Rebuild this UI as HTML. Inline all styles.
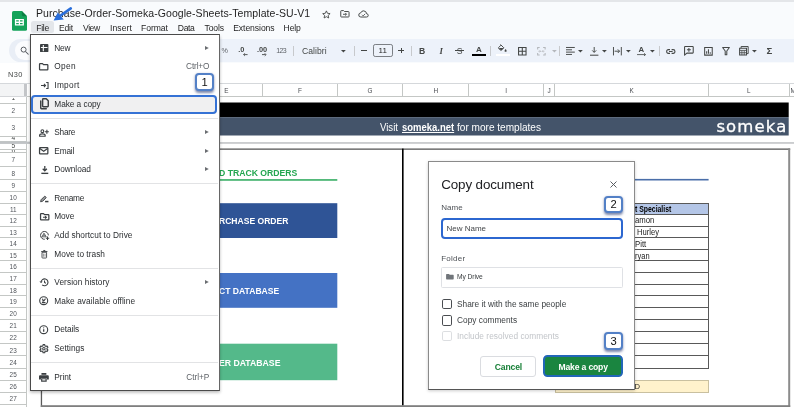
<!DOCTYPE html>
<html><head><meta charset="utf-8"><title>Purchase-Order-Someka-Google-Sheets-Template-SU-V1</title>
<style>
html,body{margin:0;padding:0;}
body{width:794px;height:407px;overflow:hidden;background:#f9fbfd;font-family:"Liberation Sans",Arial,sans-serif;}
#root{position:relative;width:794px;height:407px;overflow:hidden;will-change:transform;}
.t{position:absolute;white-space:nowrap;line-height:20px;height:20px;}
.r{position:absolute;box-sizing:border-box;}
svg{position:absolute;overflow:visible;}
</style></head><body><div id="root">
<div class="r" style="left:0px;top:0px;width:794px;height:1.8px;background:#e4e6e9;"></div>
<svg style="left:12.2px;top:10.6px" width="15" height="19.8" viewBox="0 0 15 19.8">
<path d="M1.6 0H9.8L15 5.2V18.2Q15 19.8 13.4 19.8H1.6Q0 19.8 0 18.2V1.6Q0 0 1.6 0Z" fill="#14a35a"/>
<path d="M9.8 0L15 5.2H11.2Q9.8 5.2 9.8 3.8Z" fill="#0c8045"/>
<path d="M2.9 8H11.9V14.5H2.9Z M4.2 9.3V10.6H6.8V9.3Z M8 9.3V10.6H10.6V9.3Z M4.2 11.9V13.2H6.8V11.9Z M8 11.9V13.2H10.6V11.9Z" fill="#fff" fill-rule="evenodd"/>
</svg>
<span class="t" style="left:36.0px;top:3px;font-size:10.5px;color:#1f1f1f;letter-spacing:0.070px;">Purchase-Order-Someka-Google-Sheets-Template-SU-V1</span>
<svg style="left:322px;top:9.6px" width="8.8" height="8.6" viewBox="0 0 24 23"><path d="M12 2.2l3 6.6 7.1.8-5.3 4.9 1.5 7.1L12 18l-6.3 3.6 1.5-7.1L1.9 9.6 9 8.8z" fill="none" stroke="#444746" stroke-width="2.4" stroke-linejoin="round"/></svg>
<svg style="left:340px;top:10.4px" width="9.8" height="7.6" viewBox="0 0 26 20"><path d="M2 3.2Q2 1.5 3.7 1.5H9.5L12 4H22.3Q24 4 24 5.7V16.8Q24 18.5 22.3 18.5H3.7Q2 18.5 2 16.8Z" fill="none" stroke="#444746" stroke-width="2.6"/><path d="M8 11.3H17M14 8l3.3 3.3L14 14.6" fill="none" stroke="#444746" stroke-width="2.4"/></svg>
<svg style="left:358px;top:10.4px" width="11" height="7.6" viewBox="0 0 29 20"><path d="M7.5 18.5H22.5Q27 18.5 27 14.2Q27 10.4 23 10Q22 3 15 2.2Q9 2.2 7.2 7.6Q2 8.2 2 13.2Q2 18.5 7.5 18.5Z" fill="none" stroke="#444746" stroke-width="2.6"/><path d="M10.5 12.5l3 3 5.5-5.5" fill="none" stroke="#444746" stroke-width="2.2"/></svg>
<div class="r" style="left:31.3px;top:20.8px;width:22.4px;height:12.2px;background:#e3e6ea;border-radius:2.5px;"></div>
<span class="t" style="left:36.2px;top:18px;font-size:8.6px;color:#1f1f1f;letter-spacing:-0.290px;">File</span>
<span class="t" style="left:59.0px;top:18px;font-size:8.6px;color:#1f1f1f;letter-spacing:-0.205px;">Edit</span>
<span class="t" style="left:83.0px;top:18px;font-size:8.6px;color:#1f1f1f;letter-spacing:-0.446px;">View</span>
<span class="t" style="left:110.0px;top:18px;font-size:8.6px;color:#1f1f1f;letter-spacing:0.082px;">Insert</span>
<span class="t" style="left:141.0px;top:18px;font-size:8.6px;color:#1f1f1f;letter-spacing:-0.073px;">Format</span>
<span class="t" style="left:177.8px;top:18px;font-size:8.6px;color:#1f1f1f;letter-spacing:-0.367px;">Data</span>
<span class="t" style="left:204.5px;top:18px;font-size:8.6px;color:#1f1f1f;letter-spacing:-0.115px;">Tools</span>
<span class="t" style="left:233.2px;top:18px;font-size:8.6px;color:#1f1f1f;letter-spacing:-0.067px;">Extensions</span>
<span class="t" style="left:283.6px;top:18px;font-size:8.6px;color:#1f1f1f;letter-spacing:-0.122px;">Help</span>
<svg style="left:0;top:0" width="794" height="407"><path d="M70.8 8.4L58.5 17" stroke="#2a6fdb" stroke-width="2.6" stroke-linecap="round" fill="none"/><path d="M53.6 20.4L57.8 12.4L63.8 19.6Z" fill="#2a6fdb"/></svg>
<div class="r" style="left:9px;top:39.2px;width:800px;height:23.2px;background:#e9eef6;border-radius:11.6px;"></div>
<div class="r" style="left:100px;top:39.2px;width:700px;height:23.2px;background:#edf2fa;"></div>
<div class="r" style="left:14.6px;top:41px;width:80px;height:18.6px;background:#fbfcfe;border-radius:9.3px;"></div>
<svg style="left:20px;top:45.6px" width="9" height="9" viewBox="0 0 18 18"><circle cx="7.2" cy="7.2" r="5" fill="none" stroke="#50545a" stroke-width="1.9"/><path d="M11 11l6 6" stroke="#50545a" stroke-width="2.1"/></svg>
<div class="r" style="left:0px;top:62.5px;width:794px;height:21px;background:#ffffff;"></div>
<span class="t" style="left:8.0px;top:65px;font-size:7.4px;color:#444746;letter-spacing:0.408px;">N30</span>
<span class="t" style="left:221.4px;top:41px;font-size:7.2px;color:#5f6368;">%</span>
<span class="t" style="left:238.2px;top:40px;font-size:7.4px;color:#444746;font-weight:700;letter-spacing:0.114px;">.0</span>
<svg style="left:243.2px;top:52.5px" width="4.6" height="3.2" viewBox="0 0 46 32"><path d="M46 16H10M18 3L5 16L18 29" fill="none" stroke="#444746" stroke-width="9"/></svg>
<span class="t" style="left:257.1px;top:40px;font-size:7.4px;color:#444746;font-weight:700;letter-spacing:-0.096px;">.00</span>
<svg style="left:261.8px;top:52.5px" width="4.6" height="3.2" viewBox="0 0 46 32"><path d="M0 16H36M28 3L41 16L28 29" fill="none" stroke="#444746" stroke-width="9"/></svg>
<span class="t" style="left:276.2px;top:41px;font-size:7px;color:#5f6368;letter-spacing:-0.627px;">123</span>
<div class="r" style="left:292.5px;top:45.6px;width:1px;height:10.2px;background:#c7c9cc;"></div>
<span class="t" style="left:302.0px;top:41px;font-size:8.6px;color:#444746;letter-spacing:0.032px;">Calibri</span>
<svg style="left:340.8px;top:49.6px" width="4.8" height="2.6" viewBox="0 0 48 26"><path d="M0 0H48L24 26Z" fill="#444746"/></svg>
<div class="r" style="left:353.8px;top:45.6px;width:1px;height:10.2px;background:#c7c9cc;"></div>
<div class="r" style="left:361.2px;top:50.1px;width:5.6px;height:1px;background:#444746;"></div>
<div class="r" style="left:373px;top:43.8px;width:19.6px;height:13.4px;border:1px solid #7b7f84;border-radius:2.2px;"></div>
<span class="t" style="left:378.6px;top:41px;font-size:8px;color:#1f1f1f;">11</span>
<div class="r" style="left:398.2px;top:50.1px;width:5.6px;height:1px;background:#444746;"></div>
<div class="r" style="left:400.5px;top:47.8px;width:1px;height:5.6px;background:#444746;"></div>
<div class="r" style="left:410.6px;top:45.6px;width:1px;height:10.2px;background:#c7c9cc;"></div>
<span class="t" style="left:418.9px;top:41px;font-size:8.6px;color:#444746;font-weight:700;">B</span>
<span class="t" style="left:439.5px;top:41px;font-size:8.6px;color:#444746;font-weight:700;font-style:italic;font-family:'Liberation Serif',serif;">I</span>
<span class="t" style="left:456.7px;top:41px;font-size:8.6px;color:#444746;">S</span>
<div class="r" style="left:455.4px;top:50.4px;width:8.4px;height:0.9px;background:#444746;"></div>
<span class="t" style="left:476.1px;top:40px;font-size:8px;color:#444746;font-weight:700;">A</span>
<div class="r" style="left:472px;top:53.6px;width:13.7px;height:2.4px;background:#000;"></div>
<div class="r" style="left:490.1px;top:45.6px;width:1px;height:10.2px;background:#c7c9cc;"></div>
<svg style="left:497.6px;top:44.4px" width="9.6" height="8" viewBox="0 0 24 20"><path d="M6.2 1.2L14.5 9.5L8.4 15.6Q7.4 16.6 6.4 15.6L1.6 10.8Q0.6 9.8 1.6 8.8L7.6 2.8" fill="none" stroke="#444746" stroke-width="2.4"/><path d="M2 10H14L8 16Z" fill="#444746"/><path d="M19 12.5Q21.6 15.6 21.6 17.2Q21.6 19.4 19 19.4Q16.4 19.4 16.4 17.2Q16.4 15.6 19 12.5Z" fill="#444746"/></svg>
<div class="r" style="left:496.3px;top:53.6px;width:13.6px;height:2.4px;background:#ffffff;"></div>
<svg style="left:517.6px;top:46.8px" width="8.6" height="8.6" viewBox="0 0 20 20"><path d="M1.3 1.3H18.7V18.7H1.3ZM10 1.3V18.7M1.3 10H18.7" fill="none" stroke="#444746" stroke-width="2.5"/></svg>
<svg style="left:537.2px;top:46.8px" width="8.8" height="8.6" viewBox="0 0 20 20"><path d="M6 1.3H1.3V6M14 1.3H18.7V6M6 18.7H1.3V14M14 18.7H18.7V14" fill="none" stroke="#b4b7bb" stroke-width="2.5"/><path d="M3 10H8M6 7.6L8.4 10L6 12.4M17 10H12M14 7.6L11.6 10L14 12.4" fill="none" stroke="#b4b7bb" stroke-width="1.8"/></svg>
<svg style="left:551.6px;top:49.6px" width="4.8" height="2.6" viewBox="0 0 48 26"><path d="M0 0H48L24 26Z" fill="#b4b7bb"/></svg>
<div class="r" style="left:559.3px;top:45.6px;width:1px;height:10.2px;background:#c7c9cc;"></div>
<svg style="left:565.8px;top:47px" width="8.8" height="8" viewBox="0 0 22 20"><path d="M0 1.2H22M0 7H15M0 12.8H22M0 18.6H15" stroke="#444746" stroke-width="2.4"/></svg>
<svg style="left:578.0px;top:49.6px" width="4.8" height="2.6" viewBox="0 0 48 26"><path d="M0 0H48L24 26Z" fill="#444746"/></svg>
<svg style="left:589.8px;top:46.6px" width="8.4" height="8.8" viewBox="0 0 21 22"><path d="M10.5 0V13M5.5 8.5L10.5 13.5L15.5 8.5" fill="none" stroke="#444746" stroke-width="2.4"/><path d="M0 20.5H21" stroke="#444746" stroke-width="2.6"/></svg>
<svg style="left:601.8000000000001px;top:49.6px" width="4.8" height="2.6" viewBox="0 0 48 26"><path d="M0 0H48L24 26Z" fill="#444746"/></svg>
<svg style="left:613.2px;top:46.8px" width="8.8" height="8.4" viewBox="0 0 22 21"><path d="M1.2 0V21M20.8 0V21" stroke="#444746" stroke-width="2.4"/><path d="M4 10.5H16M12 6L16.5 10.5L12 15" fill="none" stroke="#444746" stroke-width="2.4"/></svg>
<svg style="left:626.0px;top:49.6px" width="4.8" height="2.6" viewBox="0 0 48 26"><path d="M0 0H48L24 26Z" fill="#444746"/></svg>
<span class="t" style="left:638.6px;top:40px;font-size:7.8px;color:#444746;font-weight:700;">A</span>
<svg style="left:636.8px;top:53.2px" width="9.6" height="3.2" viewBox="0 0 30 10"><path d="M0 5H26M22 1L27 5L22 9" fill="none" stroke="#444746" stroke-width="2.6"/></svg>
<svg style="left:649.8000000000001px;top:49.6px" width="4.8" height="2.6" viewBox="0 0 48 26"><path d="M0 0H48L24 26Z" fill="#444746"/></svg>
<div class="r" style="left:659.1px;top:45.6px;width:1px;height:10.2px;background:#c7c9cc;"></div>
<svg style="left:666.2px;top:48.6px" width="9.6" height="5" viewBox="0 0 24 12.5"><path d="M10 1.6H6.2Q1.6 1.6 1.6 6.25Q1.6 10.9 6.2 10.9H10M14 1.6H17.8Q22.4 1.6 22.4 6.25Q22.4 10.9 17.8 10.9H14M7.5 6.25H16.5" fill="none" stroke="#444746" stroke-width="2.6"/></svg>
<svg style="left:684.2px;top:46.2px" width="9.8" height="9.8" viewBox="0 0 24 24"><path d="M2.8 1.4H21.2Q22.6 1.4 22.6 2.8V16Q22.6 17.4 21.2 17.4H7L1.4 22.6V2.8Q1.4 1.4 2.8 1.4Z" fill="none" stroke="#444746" stroke-width="2.6" stroke-linejoin="round"/><path d="M12 4.6V14.2M7.2 9.4H16.8" stroke="#444746" stroke-width="2.6"/></svg>
<svg style="left:703.6px;top:46.7px" width="8.9" height="8.7" viewBox="0 0 22 22"><path d="M1.4 1.4H20.6V20.6H1.4Z" fill="none" stroke="#444746" stroke-width="2.6"/><path d="M6.5 17V11M11 17V6M15.5 17V13" stroke="#444746" stroke-width="2.6"/></svg>
<svg style="left:722px;top:47px" width="8" height="8.4" viewBox="0 0 20 21"><path d="M1.5 1.4H18.5L12 10V19.5H8V10Z" fill="none" stroke="#444746" stroke-width="2.6" stroke-linejoin="round"/></svg>
<svg style="left:738.8px;top:46.4px" width="9.8" height="9.6" viewBox="0 0 24 24"><path d="M5 5V1.3H22.7V19H19" fill="none" stroke="#444746" stroke-width="2.4"/><path d="M1.3 5.5H18.5V22.7H1.3Z" fill="none" stroke="#444746" stroke-width="2.6"/><path d="M1.3 11H18.5M7 11V22.7M12.8 11V22.7M1.3 16.8H18.5" stroke="#444746" stroke-width="2"/></svg>
<svg style="left:751.8000000000001px;top:49.6px" width="4.8" height="2.6" viewBox="0 0 48 26"><path d="M0 0H48L24 26Z" fill="#444746"/></svg>
<span class="t" style="left:766.6px;top:41px;font-size:9.6px;color:#444746;font-weight:700;">Σ</span>
<div class="r" style="left:0px;top:83px;width:794px;height:324px;background:#ffffff;"></div>
<div class="r" style="left:0px;top:83px;width:794px;height:14px;background:#ffffff;border-top:1px solid #d5d8db;border-bottom:1px solid #c4c7c5;"></div>
<div class="r" style="left:262.4px;top:83.5px;width:1px;height:13.5px;background:#c4c7c5;"></div>
<span class="t" style="left:224.3px;top:81px;font-size:6.4px;color:#4a4d52;">E</span>
<div class="r" style="left:336.7px;top:83.5px;width:1px;height:13.5px;background:#c4c7c5;"></div>
<span class="t" style="left:298.1px;top:81px;font-size:6.4px;color:#4a4d52;">F</span>
<div class="r" style="left:402.4px;top:83.5px;width:1px;height:13.5px;background:#c4c7c5;"></div>
<span class="t" style="left:367.6px;top:81px;font-size:6.4px;color:#4a4d52;">G</span>
<div class="r" style="left:468.1px;top:83.5px;width:1px;height:13.5px;background:#c4c7c5;"></div>
<span class="t" style="left:433.4px;top:81px;font-size:6.4px;color:#4a4d52;">H</span>
<div class="r" style="left:543.1px;top:83.5px;width:1px;height:13.5px;background:#c4c7c5;"></div>
<span class="t" style="left:505.2px;top:81px;font-size:6.4px;color:#4a4d52;">I</span>
<div class="r" style="left:554.2px;top:83.5px;width:1px;height:13.5px;background:#c4c7c5;"></div>
<span class="t" style="left:547.6px;top:81px;font-size:6.4px;color:#4a4d52;">J</span>
<div class="r" style="left:708.1px;top:83.5px;width:1px;height:13.5px;background:#c4c7c5;"></div>
<span class="t" style="left:629.5px;top:81px;font-size:6.4px;color:#4a4d52;">K</span>
<div class="r" style="left:788.5px;top:83.5px;width:1px;height:13.5px;background:#c4c7c5;"></div>
<span class="t" style="left:747.0px;top:81px;font-size:6.4px;color:#4a4d52;">L</span>
<div class="r" style="left:799.5px;top:83.5px;width:1px;height:13.5px;background:#c4c7c5;"></div>
<span class="t" style="left:790.6px;top:81px;font-size:6.4px;color:#4a4d52;">M</span>
<div class="r" style="left:0px;top:97px;width:27px;height:310px;background:#ffffff;border-right:1px solid #c4c7c5;"></div>
<div class="r" style="left:0px;top:83.5px;width:27px;height:13.6px;background:#f3f4f5;"></div>
<div class="r" style="left:24px;top:84px;width:2.9px;height:12.4px;background:#c3c5c8;"></div>
<div class="r" style="left:0px;top:96.4px;width:27px;height:1px;background:#d4d6d9;"></div>
<div class="r" style="left:0px;top:102.7px;width:27px;height:1px;background:#c4c7c5;"></div>
<div class="r" style="left:0px;top:116.8px;width:27px;height:1px;background:#c4c7c5;"></div>
<span class="t" style="left:11.4px;top:101px;font-size:6.4px;color:#50545a;">2</span>
<div class="r" style="left:0px;top:136.0px;width:27px;height:1px;background:#c4c7c5;"></div>
<span class="t" style="left:11.4px;top:118px;font-size:6.4px;color:#50545a;">3</span>
<div class="r" style="left:0px;top:141.3px;width:27px;height:1px;background:#c4c7c5;"></div>
<div class="r" style="left:0px;top:149.1px;width:27px;height:1px;background:#c4c7c5;"></div>
<div class="r" style="left:0px;top:151.9px;width:27px;height:1px;background:#c4c7c5;"></div>
<div class="r" style="left:0px;top:165.8px;width:27px;height:1px;background:#c4c7c5;"></div>
<span class="t" style="left:11.4px;top:150px;font-size:6.4px;color:#50545a;">7</span>
<div class="r" style="left:0px;top:179.4px;width:27px;height:1px;background:#c4c7c5;"></div>
<span class="t" style="left:11.4px;top:164px;font-size:6.4px;color:#50545a;">8</span>
<div class="r" style="left:0px;top:191.0px;width:27px;height:1px;background:#c4c7c5;"></div>
<span class="t" style="left:11.4px;top:176px;font-size:6.4px;color:#50545a;">9</span>
<div class="r" style="left:0px;top:202.6px;width:27px;height:1px;background:#c4c7c5;"></div>
<span class="t" style="left:9.6px;top:188px;font-size:6.4px;color:#50545a;">10</span>
<div class="r" style="left:0px;top:214.2px;width:27px;height:1px;background:#c4c7c5;"></div>
<span class="t" style="left:9.9px;top:200px;font-size:6.4px;color:#50545a;">11</span>
<div class="r" style="left:0px;top:225.9px;width:27px;height:1px;background:#c4c7c5;"></div>
<span class="t" style="left:9.6px;top:211px;font-size:6.4px;color:#50545a;">12</span>
<div class="r" style="left:0px;top:237.2px;width:27px;height:1px;background:#c4c7c5;"></div>
<span class="t" style="left:9.6px;top:223px;font-size:6.4px;color:#50545a;">13</span>
<div class="r" style="left:0px;top:248.8px;width:27px;height:1px;background:#c4c7c5;"></div>
<span class="t" style="left:9.6px;top:234px;font-size:6.4px;color:#50545a;">14</span>
<div class="r" style="left:0px;top:260.4px;width:27px;height:1px;background:#c4c7c5;"></div>
<span class="t" style="left:9.6px;top:246px;font-size:6.4px;color:#50545a;">15</span>
<div class="r" style="left:0px;top:272.1px;width:27px;height:1px;background:#c4c7c5;"></div>
<span class="t" style="left:9.6px;top:257px;font-size:6.4px;color:#50545a;">16</span>
<div class="r" style="left:0px;top:283.7px;width:27px;height:1px;background:#c4c7c5;"></div>
<span class="t" style="left:9.6px;top:269px;font-size:6.4px;color:#50545a;">17</span>
<div class="r" style="left:0px;top:295.3px;width:27px;height:1px;background:#c4c7c5;"></div>
<span class="t" style="left:9.6px;top:281px;font-size:6.4px;color:#50545a;">18</span>
<div class="r" style="left:0px;top:306.8px;width:27px;height:1px;background:#c4c7c5;"></div>
<span class="t" style="left:9.6px;top:292px;font-size:6.4px;color:#50545a;">19</span>
<div class="r" style="left:0px;top:318.9px;width:27px;height:1px;background:#c4c7c5;"></div>
<span class="t" style="left:9.6px;top:304px;font-size:6.4px;color:#50545a;">20</span>
<div class="r" style="left:0px;top:331.1px;width:27px;height:1px;background:#c4c7c5;"></div>
<span class="t" style="left:9.6px;top:316px;font-size:6.4px;color:#50545a;">21</span>
<div class="r" style="left:0px;top:343.3px;width:27px;height:1px;background:#c4c7c5;"></div>
<span class="t" style="left:9.6px;top:328px;font-size:6.4px;color:#50545a;">22</span>
<div class="r" style="left:0px;top:355.4px;width:27px;height:1px;background:#c4c7c5;"></div>
<span class="t" style="left:9.6px;top:341px;font-size:6.4px;color:#50545a;">23</span>
<div class="r" style="left:0px;top:367.6px;width:27px;height:1px;background:#c4c7c5;"></div>
<span class="t" style="left:9.6px;top:353px;font-size:6.4px;color:#50545a;">24</span>
<div class="r" style="left:0px;top:379.9px;width:27px;height:1px;background:#c4c7c5;"></div>
<span class="t" style="left:9.6px;top:365px;font-size:6.4px;color:#50545a;">25</span>
<div class="r" style="left:0px;top:391.6px;width:27px;height:1px;background:#c4c7c5;"></div>
<span class="t" style="left:9.6px;top:377px;font-size:6.4px;color:#50545a;">26</span>
<div class="r" style="left:0px;top:403.7px;width:27px;height:1px;background:#c4c7c5;"></div>
<span class="t" style="left:9.6px;top:389px;font-size:6.4px;color:#50545a;">27</span>
<div class="r" style="left:0px;top:415.5px;width:27px;height:1px;background:#c4c7c5;"></div>
<span class="t" style="left:9.6px;top:401px;font-size:6.4px;color:#50545a;">28</span>
<div class="r" style="left:0;top:97.8px;width:26px;height:4.9px;overflow:hidden;"><span class="t" style="left:11.4px;top:-4.4px;font-size:6.6px;line-height:9px;color:#444746;">1</span></div>
<div class="r" style="left:0;top:136.5px;width:26px;height:4.8px;overflow:hidden;"><span class="t" style="left:11.4px;top:-3.2px;font-size:6.6px;line-height:9px;color:#444746;">4</span></div>
<div class="r" style="left:0;top:144.4px;width:26px;height:4.7px;overflow:hidden;"><span class="t" style="left:11.4px;top:-3.2px;font-size:6.6px;line-height:9px;color:#444746;">5</span></div>
<div class="r" style="left:0;top:149.6px;width:26px;height:2.3px;overflow:hidden;"><span class="t" style="left:11.4px;top:-3.2px;font-size:6.6px;line-height:9px;color:#444746;">6</span></div>
<svg style="left:0;top:0" width="794" height="407"><rect x="0" y="142.1" width="794" height="1.7" fill="#c6c8ca"/></svg>
<svg style="left:0;top:0" width="794" height="407"><rect x="0" y="141.6" width="30" height="2.1" fill="#bfc2c5"/></svg>
<svg style="left:0;top:0" width="794" height="407"><rect x="40" y="102.5" width="748.7" height="14.7" fill="#000000"/></svg>
<svg style="left:0;top:0" width="794" height="407"><rect x="40" y="117.2" width="748.7" height="18.3" fill="#44546a"/></svg>
<span class="t" style="left:380.2px;top:117px;font-size:10.6px;color:#ffffff;transform-origin:0 50%;transform:scaleX(0.9075);">Visit</span>
<span class="t" style="left:401.7px;top:117px;font-size:10.6px;color:#ffffff;font-weight:700;text-decoration:underline;text-decoration-thickness:1px;text-underline-offset:1px;transform-origin:0 50%;transform:scaleX(0.8949);">someka.net</span>
<span class="t" style="left:457.2px;top:117px;font-size:10.6px;color:#ffffff;transform-origin:0 50%;transform:scaleX(0.9506);">for more templates</span>
<span class="t" style="left:716.4px;top:117px;font-size:16.5px;color:#ffffff;letter-spacing:1.118px;-webkit-text-stroke:0.3px #fff;font-family:'DejaVu Sans',sans-serif;">someka</span>
<svg style="left:0;top:0" width="794" height="407"><rect x="40.8" y="148.4" width="749.4" height="1.5" fill="#6e6e6e"/></svg>
<svg style="left:0;top:0" width="794" height="407"><rect x="40.8" y="148.4" width="1.3" height="259" fill="#5a5a5a"/></svg>
<svg style="left:0;top:0" width="794" height="407"><rect x="788.2" y="148.4" width="2" height="259" fill="#8c8c8c"/></svg>
<svg style="left:0;top:0" width="794" height="407"><rect x="40.8" y="405.2" width="749.4" height="2" fill="#7f7f7f"/></svg>
<svg style="left:0;top:0" width="794" height="407"><rect x="402" y="148.6" width="1.6" height="256.6" fill="#000000"/></svg>
<span class="t" style="left:218.6px;top:163px;font-size:9.4px;color:#23a650;font-weight:700;transform-origin:0 50%;transform:scaleX(0.9233);">D TRACK ORDERS</span>
<svg style="left:0;top:0" width="794" height="407"><rect x="100" y="179.2" width="237.3" height="1.5" fill="#2aa85a"/></svg>
<svg style="left:0;top:0" width="794" height="407"><rect x="100" y="203.2" width="237.3" height="34.8" fill="#2f5496"/></svg>
<span class="t" style="left:219.4px;top:211px;font-size:9.4px;color:#ffffff;font-weight:700;transform-origin:0 50%;transform:scaleX(0.9127);">RCHASE ORDER</span>
<svg style="left:0;top:0" width="794" height="407"><rect x="100" y="273" width="237.3" height="34.8" fill="#4472c4"/></svg>
<span class="t" style="left:219.4px;top:281px;font-size:9.4px;color:#ffffff;font-weight:700;transform-origin:0 50%;transform:scaleX(0.9155);">CT DATABASE</span>
<svg style="left:0;top:0" width="794" height="407"><rect x="100" y="343.7" width="237.3" height="36.5" fill="#54b98a"/></svg>
<span class="t" style="left:219.4px;top:353px;font-size:9.4px;color:#ffffff;font-weight:700;transform-origin:0 50%;transform:scaleX(0.9263);">ER DATABASE</span>
<svg style="left:0;top:0" width="794" height="407"><rect x="560" y="178.9" width="148.6" height="1.6" fill="#4a6ea9"/></svg>
<div class="r" style="left:555px;top:202.6px;width:153.6px;height:166px;background:#ffffff;border:1px solid #595959;"></div>
<div class="r" style="left:556px;top:203.6px;width:151.6px;height:10.6px;background:#b4c6e7;"></div>
<div class="r" style="left:555px;top:214.2px;width:153.6px;height:1px;background:#595959;"></div>
<div class="r" style="left:555px;top:225.9px;width:153.6px;height:1px;background:#595959;"></div>
<div class="r" style="left:555px;top:237.2px;width:153.6px;height:1px;background:#595959;"></div>
<div class="r" style="left:555px;top:248.8px;width:153.6px;height:1px;background:#595959;"></div>
<div class="r" style="left:555px;top:260.4px;width:153.6px;height:1px;background:#595959;"></div>
<div class="r" style="left:555px;top:272.1px;width:153.6px;height:1px;background:#595959;"></div>
<div class="r" style="left:555px;top:283.7px;width:153.6px;height:1px;background:#595959;"></div>
<div class="r" style="left:555px;top:295.3px;width:153.6px;height:1px;background:#595959;"></div>
<div class="r" style="left:555px;top:306.8px;width:153.6px;height:1px;background:#595959;"></div>
<div class="r" style="left:555px;top:318.9px;width:153.6px;height:1px;background:#595959;"></div>
<div class="r" style="left:555px;top:331.1px;width:153.6px;height:1px;background:#595959;"></div>
<div class="r" style="left:555px;top:343.3px;width:153.6px;height:1px;background:#595959;"></div>
<div class="r" style="left:555px;top:355.4px;width:153.6px;height:1px;background:#595959;"></div>
<span class="t" style="left:635.2px;top:199px;font-size:8.4px;color:#000000;font-weight:700;transform-origin:0 50%;transform:scaleX(0.8207);">t Specialist</span>
<span class="t" style="left:635.4px;top:211px;font-size:8.2px;color:#1a1a1a;transform-origin:0 50%;transform:scaleX(0.9458);">amon</span>
<span class="t" style="left:637.2px;top:223px;font-size:8.2px;color:#1a1a1a;transform-origin:0 50%;transform:scaleX(0.9284);">Hurley</span>
<span class="t" style="left:635.2px;top:235px;font-size:8.2px;color:#1a1a1a;transform-origin:0 50%;transform:scaleX(0.9453);">Pitt</span>
<span class="t" style="left:635.0px;top:247px;font-size:8.2px;color:#1a1a1a;transform-origin:0 50%;transform:scaleX(0.9152);">ryan</span>
<div class="r" style="left:555px;top:380.4px;width:153.6px;height:12.2px;background:#fff2cc;border:1px solid #c9c0a0;"></div>
<span class="t" style="left:634.6px;top:377px;font-size:7.6px;color:#1a1a1a;">D</span>
<div class="r" style="left:30.2px;top:34.4px;width:189.4px;height:356.4px;background:#ffffff;border:1px solid #4a4a4a;border-right-color:#666;box-shadow:0 1.5px 3px rgba(0,0,0,0.28);"></div>
<div class="r" style="left:31.2px;top:95px;width:185.8px;height:18.8px;background:#f0f0f1;border:2px solid #3572d5;border-radius:4px;"></div>
<span class="t" style="left:54.3px;top:38px;font-size:8.3px;color:#2a2d30;letter-spacing:-0.168px;">New</span>
<svg style="left:204.8px;top:46.2px" width="3.8" height="4" viewBox="0 0 38 40"><path d="M0 0L38 20L0 40Z" fill="#6b6e72"/></svg>
<span class="t" style="left:54.3px;top:56px;font-size:8.3px;color:#2a2d30;letter-spacing:0.349px;">Open</span>
<span class="t" style="left:186.1px;top:56px;font-size:8.3px;color:#5f6368;letter-spacing:-0.169px;">Ctrl+O</span>
<span class="t" style="left:54.3px;top:75px;font-size:8.3px;color:#2a2d30;letter-spacing:0.296px;">Import</span>
<span class="t" style="left:54.3px;top:94px;font-size:8.3px;color:#2a2d30;letter-spacing:-0.060px;">Make a copy</span>
<div class="r" style="left:31.2px;top:117.7px;width:187.2px;height:1px;background:#e2e3e5;"></div>
<span class="t" style="left:54.3px;top:122px;font-size:8.3px;color:#2a2d30;letter-spacing:-0.250px;">Share</span>
<svg style="left:204.8px;top:129.8px" width="3.8" height="4" viewBox="0 0 38 40"><path d="M0 0L38 20L0 40Z" fill="#6b6e72"/></svg>
<span class="t" style="left:54.3px;top:141px;font-size:8.3px;color:#2a2d30;letter-spacing:-0.171px;">Email</span>
<svg style="left:204.8px;top:148.6px" width="3.8" height="4" viewBox="0 0 38 40"><path d="M0 0L38 20L0 40Z" fill="#6b6e72"/></svg>
<span class="t" style="left:54.3px;top:159px;font-size:8.3px;color:#2a2d30;letter-spacing:-0.039px;">Download</span>
<svg style="left:204.8px;top:167.2px" width="3.8" height="4" viewBox="0 0 38 40"><path d="M0 0L38 20L0 40Z" fill="#6b6e72"/></svg>
<div class="r" style="left:31.2px;top:183.3px;width:187.2px;height:1px;background:#e2e3e5;"></div>
<span class="t" style="left:54.3px;top:188px;font-size:8.3px;color:#2a2d30;letter-spacing:-0.279px;">Rename</span>
<span class="t" style="left:54.3px;top:206px;font-size:8.3px;color:#2a2d30;letter-spacing:-0.099px;">Move</span>
<span class="t" style="left:54.3px;top:225px;font-size:8.3px;color:#2a2d30;letter-spacing:0.033px;">Add shortcut to Drive</span>
<span class="t" style="left:54.3px;top:244px;font-size:8.3px;color:#2a2d30;letter-spacing:0.032px;">Move to trash</span>
<div class="r" style="left:31.2px;top:267.6px;width:187.2px;height:1px;background:#e2e3e5;"></div>
<span class="t" style="left:54.3px;top:272px;font-size:8.3px;color:#2a2d30;letter-spacing:0.057px;">Version history</span>
<svg style="left:204.8px;top:280.3px" width="3.8" height="4" viewBox="0 0 38 40"><path d="M0 0L38 20L0 40Z" fill="#6b6e72"/></svg>
<span class="t" style="left:54.3px;top:291px;font-size:8.3px;color:#2a2d30;letter-spacing:0.051px;">Make available offline</span>
<div class="r" style="left:31.2px;top:314.8px;width:187.2px;height:1px;background:#e2e3e5;"></div>
<span class="t" style="left:54.3px;top:319px;font-size:8.3px;color:#2a2d30;letter-spacing:-0.082px;">Details</span>
<span class="t" style="left:54.3px;top:338px;font-size:8.3px;color:#2a2d30;letter-spacing:0.014px;">Settings</span>
<div class="r" style="left:31.2px;top:361.9px;width:187.2px;height:1px;background:#e2e3e5;"></div>
<span class="t" style="left:54.3px;top:367px;font-size:8.3px;color:#2a2d30;letter-spacing:-0.073px;">Print</span>
<span class="t" style="left:186.2px;top:367px;font-size:8.3px;color:#5f6368;letter-spacing:-0.015px;">Ctrl+P</span>
<svg style="left:39.8px;top:44.2px" width="8.4" height="8.2" viewBox="0 0 21 20"><rect width="21" height="20" rx="2.2" fill="#3c4043"/><path d="M8.3 2V18M2.2 8.6H18.8" stroke="#fff" stroke-width="2.7"/></svg>
<svg style="left:39.4px;top:63.4px" width="9.4" height="7.6" viewBox="0 0 24 19"><path d="M1.4 3Q1.4 1.4 3 1.4H9L11.4 4H21Q22.6 4 22.6 5.6V16Q22.6 17.6 21 17.6H3Q1.4 17.6 1.4 16Z" fill="none" stroke="#3c4043" stroke-width="3.2" stroke-linejoin="round"/></svg>
<svg style="left:40.6px;top:82.2px" width="7.6" height="7" viewBox="0 0 22 20"><path d="M0 10H12.5M8.5 5.4L13 10L8.5 14.6" fill="none" stroke="#3c4043" stroke-width="3.2"/><path d="M15 1.4H20.4V18.6H15" fill="none" stroke="#3c4043" stroke-width="3.2"/></svg>
<svg style="left:39.8px;top:98.4px" width="9" height="11.4" viewBox="0 0 18 23"><path d="M6.6 1.4H12.5L16.6 5.6V16.4Q16.6 17.8 15.2 17.8H6.6Q5.2 17.8 5.2 16.4V2.8Q5.2 1.4 6.6 1.4Z" fill="none" stroke="#3c4043" stroke-width="2.9" stroke-linejoin="round"/><path d="M1.4 6V20.2Q1.4 21.6 2.8 21.6H12.6" fill="none" stroke="#3c4043" stroke-width="2.9" stroke-linecap="round"/></svg>
<svg style="left:39.4px;top:128.6px" width="9.8" height="7.8" viewBox="0 0 25 20"><circle cx="8.6" cy="5.6" r="3.6" fill="none" stroke="#3c4043" stroke-width="2.9"/><path d="M1.4 18.6V16.4Q1.4 12.6 8.6 12.6Q15.8 12.6 15.8 16.4V18.6Z" fill="none" stroke="#3c4043" stroke-width="2.9" stroke-linejoin="round"/><path d="M20.2 2V12M15.2 7H25.2" stroke="#3c4043" stroke-width="2.9"/></svg>
<svg style="left:39.4px;top:147.4px" width="9.4" height="7.6" viewBox="0 0 24 19"><rect x="1.4" y="1.4" width="21.2" height="16.2" rx="1.6" fill="none" stroke="#3c4043" stroke-width="3.2"/><path d="M2 3.6L12 10.6L22 3.6" fill="none" stroke="#3c4043" stroke-width="3.2"/></svg>
<svg style="left:40.6px;top:165.6px" width="7.6" height="8" viewBox="0 0 19 20"><path d="M9.5 0V11.6M4.3 7L9.5 12.2L14.7 7" fill="none" stroke="#3c4043" stroke-width="3.2"/><path d="M0.8 18.4H18.2" stroke="#3c4043" stroke-width="3.4"/></svg>
<svg style="left:39.8px;top:195px" width="8.6" height="7.6" viewBox="0 0 23 20"><path d="M1.6 18L2.8 12.6L11.6 3.8Q13 2.4 14.4 3.8L15.8 5.2Q17.2 6.6 15.8 8L7 16.8Z" fill="#3c4043" fill-opacity="0.55" stroke="#3c4043" stroke-width="2.4" stroke-linejoin="round"/><path d="M13.6 17.4H22.6" stroke="#3c4043" stroke-width="4"/></svg>
<svg style="left:39.6px;top:213.4px" width="9.4" height="7.6" viewBox="0 0 24 19"><path d="M1.4 3Q1.4 1.4 3 1.4H9L11.4 4H21Q22.6 4 22.6 5.6V16Q22.6 17.6 21 17.6H3Q1.4 17.6 1.4 16Z" fill="none" stroke="#3c4043" stroke-width="3.2" stroke-linejoin="round"/><path d="M7.6 10.8H16M13 7.6L16.4 10.8L13 14" fill="none" stroke="#3c4043" stroke-width="2.7"/></svg>
<svg style="left:39.6px;top:231px" width="9.6" height="9.2" viewBox="0 0 25 24"><path d="M21.8 11.4A10.2 10.2 0 1 0 12.4 21.6" fill="none" stroke="#3c4043" stroke-width="2.6"/><path d="M10.4 5.8L16.2 15.2H5Z" fill="none" stroke="#3c4043" stroke-width="2.2" stroke-linejoin="round"/><path d="M8 11.4H13.4" stroke="#3c4043" stroke-width="1.8"/><path d="M19.6 14.6V23.4M15.2 19H24" stroke="#3c4043" stroke-width="2.8"/></svg>
<svg style="left:41.2px;top:249.6px" width="6.6" height="8.6" viewBox="0 0 16 21"><path d="M2.4 5.6H13.6V18Q13.6 19.6 12 19.6H4Q2.4 19.6 2.4 18Z" fill="none" stroke="#3c4043" stroke-width="2.2"/><path d="M0.4 3.6H15.6M5.6 1.2H10.4" stroke="#3c4043" stroke-width="2.3"/><path d="M6.2 8.8V16.4M9.8 8.8V16.4" stroke="#3c4043" stroke-width="1.3"/></svg>
<svg style="left:39.2px;top:278.2px" width="9.6" height="8.6" viewBox="0 0 25 22"><path d="M5.4 11A9 9 0 1 1 8.2 17.6" fill="none" stroke="#3c4043" stroke-width="2.9"/><path d="M1 8.6L5.4 13L9.6 8.6Z" fill="#3c4043"/><path d="M14.4 6V11.4L18 13.6" fill="none" stroke="#3c4043" stroke-width="2.7"/></svg>
<svg style="left:39.4px;top:296.2px" width="9.4" height="9.4" viewBox="0 0 24 24"><circle cx="12" cy="12" r="10.2" fill="none" stroke="#3c4043" stroke-width="2.9"/><path d="M8 7L12.4 12.6L16.6 6.6M12.4 12.6L8 12.6M7.4 17H16.6" fill="none" stroke="#3c4043" stroke-width="2.7"/></svg>
<svg style="left:39.4px;top:324.8px" width="9.4" height="9.4" viewBox="0 0 24 24"><circle cx="12" cy="12" r="10.2" fill="none" stroke="#3c4043" stroke-width="2.9"/><path d="M12 10.6V17.4" stroke="#3c4043" stroke-width="3.2"/><circle cx="12" cy="7.2" r="1.5" fill="#3c4043"/></svg>
<svg style="left:39.2px;top:343.6px" width="9.8" height="9.4" viewBox="0 0 24 24"><path d="M10 1.6H14L14.8 4.8L17 6L20.2 5L22.2 8.6L19.8 10.8V13.2L22.2 15.4L20.2 19L17 18L14.8 19.2L14 22.4H10L9.2 19.2L7 18L3.8 19L1.8 15.4L4.2 13.2V10.8L1.8 8.6L3.8 5L7 6L9.2 4.8Z" fill="none" stroke="#3c4043" stroke-width="2.9" stroke-linejoin="round"/><circle cx="12" cy="12" r="3.2" fill="none" stroke="#3c4043" stroke-width="2.7"/></svg>
<svg style="left:39.2px;top:372.6px" width="9.8" height="8.6" viewBox="0 0 24 21"><path d="M6 0H18V4.4H6Z" fill="#3c4043"/><path d="M2.4 5.6H21.6Q24 5.6 24 8V15.6H19.2V12.4H4.8V15.6H0V8Q0 5.6 2.4 5.6Z" fill="#3c4043"/><path d="M6.6 14H17.4V19.8H6.6Z" fill="none" stroke="#3c4043" stroke-width="2.9"/></svg>
<div class="r" style="left:195.2px;top:73.1px;width:18.7px;height:17.6px;background:#ffffff;border:2px solid #5380c6;border-radius:4px;box-shadow:0 1.2px 2.5px rgba(40,60,120,0.6);"></div>
<span class="t" style="left:201.4px;top:72px;font-size:11.2px;color:#111111;">1</span>
<div class="r" style="left:428.3px;top:161.4px;width:206.8px;height:228.6px;background:#ffffff;border:1px solid #8a8a8a;border-bottom-color:#555;box-shadow:0 1px 3px rgba(0,0,0,0.2);"></div>
<span class="t" style="left:441.2px;top:175px;font-size:13.4px;color:#202124;letter-spacing:-0.112px;">Copy document</span>
<svg style="left:609.6px;top:181px" width="7" height="7" viewBox="0 0 14 14"><path d="M1 1L13 13M13 1L1 13" stroke="#50545a" stroke-width="1.9"/></svg>
<span class="t" style="left:441.2px;top:198px;font-size:8px;color:#4d5156;letter-spacing:0.065px;">Name</span>
<div class="r" style="left:440.8px;top:217.6px;width:182.2px;height:21.6px;background:#ffffff;border:2px solid #2c67d0;border-radius:4px;"></div>
<span class="t" style="left:446.6px;top:219px;font-size:8px;color:#44474a;letter-spacing:-0.021px;">New Name</span>
<span class="t" style="left:441.2px;top:249px;font-size:8px;color:#4d5156;letter-spacing:0.254px;">Folder</span>
<div class="r" style="left:440.8px;top:266.8px;width:182px;height:21px;background:#ffffff;border:1px solid #dfe1e5;border-radius:1.5px;"></div>
<svg style="left:445.6px;top:273.8px" width="7.8" height="5.4" viewBox="0 0 24 17"><path d="M0 2Q0 0 2 0H9L11.6 2.6H22Q24 2.6 24 4.6V15Q24 17 22 17H2Q0 17 0 15Z" fill="#70757a"/></svg>
<span class="t" style="left:457.0px;top:267px;font-size:6.7px;color:#3c4043;letter-spacing:-0.078px;">My Drive</span>
<div class="r" style="left:441.6px;top:299px;width:10.2px;height:10.2px;background:#ffffff;border:1.2px solid #4a4d51;border-radius:1.8px;"></div>
<span class="t" style="left:457.0px;top:294px;font-size:8.3px;color:#3c4043;">Share it with the same people</span>
<div class="r" style="left:441.6px;top:315.4px;width:10.2px;height:10.2px;background:#ffffff;border:1.2px solid #4a4d51;border-radius:1.8px;"></div>
<span class="t" style="left:457.0px;top:310px;font-size:8.3px;color:#3c4043;letter-spacing:0.010px;">Copy comments</span>
<div class="r" style="left:441.6px;top:331.2px;width:10.2px;height:10.2px;background:#ffffff;border:1.2px solid #dcdee1;border-radius:1.8px;"></div>
<span class="t" style="left:457.0px;top:326px;font-size:8.3px;color:#c2c5c9;letter-spacing:0.039px;">Include resolved comments</span>
<div class="r" style="left:480px;top:356.2px;width:56.2px;height:20.8px;background:#ffffff;border:1px solid #dadce0;border-radius:3px;"></div>
<span class="t" style="left:494.8px;top:357px;font-size:8.6px;color:#188038;font-weight:700;letter-spacing:-0.167px;">Cancel</span>
<div class="r" style="left:543.3px;top:355.4px;width:79.8px;height:21.8px;background:#1a8540;border:2px solid #2266b8;border-radius:4.5px;"></div>
<span class="t" style="left:558.4px;top:357px;font-size:8.6px;color:#ffffff;font-weight:700;letter-spacing:-0.150px;">Make a copy</span>
<div class="r" style="left:604.2px;top:195.6px;width:18.8px;height:17px;background:#ffffff;border:2px solid #5380c6;border-radius:4px;box-shadow:0 1.2px 2.5px rgba(40,60,120,0.6);"></div>
<span class="t" style="left:610.5px;top:194px;font-size:11.2px;color:#111111;">2</span>
<div class="r" style="left:604.2px;top:332px;width:18.6px;height:17.6px;background:#ffffff;border:2px solid #5380c6;border-radius:4px;box-shadow:0 1.2px 2.5px rgba(40,60,120,0.6);"></div>
<span class="t" style="left:610.4px;top:331px;font-size:11.2px;color:#111111;">3</span>
</div></body></html>
